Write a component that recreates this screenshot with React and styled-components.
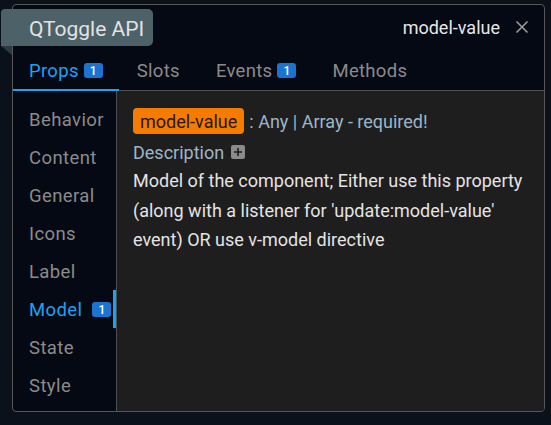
import styled, { createGlobalStyle } from "styled-components";

const GlobalStyle = createGlobalStyle`
  body {
    margin: 0;
    background: #0b111b;
    font-family: Roboto, "Liberation Sans", sans-serif;
  }
`;

const tabs = [
  { label: "Props", count: 1, active: true },
  { label: "Slots" },
  { label: "Events", count: 1 },
  { label: "Methods" },
];

const categories = [
  "Behavior",
  "Content",
  "General",
  "Icons",
  "Label",
  "Model",
  "State",
  "Style",
];

export default function App() {
  return (
    <>
      <GlobalStyle />
      <Page>
        <Card>
          <TitleTag>QToggle API</TitleTag>
          <Header>
            <PropName>model-value</PropName>
            <CloseButton aria-label="close">
              <svg width="14" height="14" viewBox="0 0 14 14">
                <path
                  d="M1.5 1.5 L12.5 12.5 M12.5 1.5 L1.5 12.5"
                  stroke="#9a9a9a"
                  strokeWidth="1.6"
                />
              </svg>
            </CloseButton>
          </Header>
          <TabBar>
            {tabs.map((tab) => (
              <Tab key={tab.label} $active={tab.active}>
                {tab.label}
                {tab.count && <Badge>{tab.count}</Badge>}
              </Tab>
            ))}
          </TabBar>
          <Body>
            <Sidebar>
              {categories.map((name) => (
                <SideItem key={name} $active={name === "Model"}>
                  {name}
                  {name === "Model" && <Badge>1</Badge>}
                </SideItem>
              ))}
            </Sidebar>
            <Content>
              <PropLine>
                <Chip>model-value</Chip>
                <TypeText>: Any | Array - required!</TypeText>
              </PropLine>
              <DescLine>
                Description
                <PlusBox>
                  <svg width="10" height="10" viewBox="0 0 10 10">
                    <path d="M5 1 V9 M1 5 H9" stroke="#1d1d1d" strokeWidth="1.6" />
                  </svg>
                </PlusBox>
              </DescLine>
              <Description>
                Model of the component; Either use this property (along with a
                listener for 'update:model-value' event) OR use v-model
                directive
              </Description>
            </Content>
          </Body>
        </Card>
      </Page>
    </>
  );
}

const Page = styled.div`
  padding: 4px 6px 13px 12px;
  height: 425px;
  box-sizing: border-box;
`;

const Card = styled.div`
  position: relative;
  height: 408px;
  box-sizing: border-box;
  border: 1px solid #575757;
  border-radius: 4px;
  background: #050913;
  display: flex;
  flex-direction: column;
`;

const TitleTag = styled.div`
  position: absolute;
  left: -12px;
  top: 4px;
  width: 152px;
  height: 37px;
  box-sizing: border-box;
  padding-left: 28px;
  padding-top: 2px;
  display: flex;
  align-items: center;
  background: #4d6168;
  color: #e2e2e2;
  font-size: 21px;
  border-radius: 4px 5px 5px 0;
  &::after {
    content: "";
    position: absolute;
    left: 0;
    top: 37px;
    border-top: 9px solid #2c3b41;
    border-left: 11px solid transparent;
  }
`;

const Header = styled.div`
  height: 44px;
  display: flex;
  align-items: center;
  justify-content: flex-end;
  padding-right: 15px;
  gap: 15px;
`;

const PropName = styled.span`
  color: #e6e6e6;
  font-size: 18px;
`;

const CloseButton = styled.span`
  display: flex;
  align-items: center;
`;

const TabBar = styled.div`
  height: 41px;
  display: flex;
  border-bottom: 1px solid #505050;
`;

const Tab = styled.div`
  position: relative;
  display: flex;
  align-items: center;
  gap: 5px;
  padding: 2px 18px 0;
  font-size: 18.5px;
  letter-spacing: 0.3px;
  color: ${(p) => (p.$active ? "#1aa3f5" : "#8b8b8b")};
  &:first-child {
    padding: 2px 16px 0;
  }
  &::after {
    content: "";
    position: absolute;
    left: 0;
    right: 0;
    bottom: -1px;
    height: 2px;
    background: ${(p) => (p.$active ? "#1aa3f5" : "transparent")};
  }
`;

const Badge = styled.span`
  display: inline-flex;
  align-items: center;
  justify-content: center;
  background: #1b74d0;
  color: #ffffff;
  font-size: 12px;
  font-weight: 500;
  letter-spacing: 0;
  height: 15px;
  min-width: 19px;
  border-radius: 3px;
`;

const Body = styled.div`
  flex: 1;
  display: flex;
  min-height: 0;
`;

const Sidebar = styled.div`
  width: 104px;
  box-sizing: border-box;
  border-right: 1px solid #505050;
  padding-top: 9px;
`;

const SideItem = styled.div`
  position: relative;
  height: 38px;
  display: flex;
  align-items: center;
  gap: 10px;
  padding-left: 16px;
  padding-top: 1px;
  box-sizing: border-box;
  font-size: 18.5px;
  letter-spacing: 0.4px;
  color: ${(p) => (p.$active ? "#1aa3f5" : "#8b8b8b")};
  &::after {
    content: "";
    position: absolute;
    right: 0;
    top: 0;
    bottom: 0;
    width: 3px;
    background: ${(p) => (p.$active ? "#1aa3f5" : "transparent")};
  }
`;

const Content = styled.div`
  flex: 1;
  background: #1e1e1e;
  padding: 17px 16px;
  border-radius: 0 0 3px 0;
`;

const PropLine = styled.div`
  display: flex;
  align-items: center;
  gap: 5px;
  height: 26px;
`;

const Chip = styled.span`
  background: #f57c00;
  color: #2b1500;
  font-size: 18px;
  padding: 0 7px;
  height: 26px;
  display: inline-flex;
  align-items: center;
  border-radius: 4px;
`;

const TypeText = styled.span`
  color: #9db6c9;
  font-size: 18px;
`;

const DescLine = styled.div`
  display: flex;
  align-items: center;
  gap: 7px;
  color: #9db6c9;
  font-size: 18px;
  margin-top: 6px;
  height: 24px;
`;

const PlusBox = styled.span`
  width: 14px;
  height: 14px;
  border-radius: 2px;
  background: #8a8a8a;
  display: inline-flex;
  align-items: center;
  justify-content: center;
`;

const Description = styled.div`
  color: #e4e4e4;
  font-size: 18px;
  line-height: 29.5px;
  margin-top: 2px;
`;
